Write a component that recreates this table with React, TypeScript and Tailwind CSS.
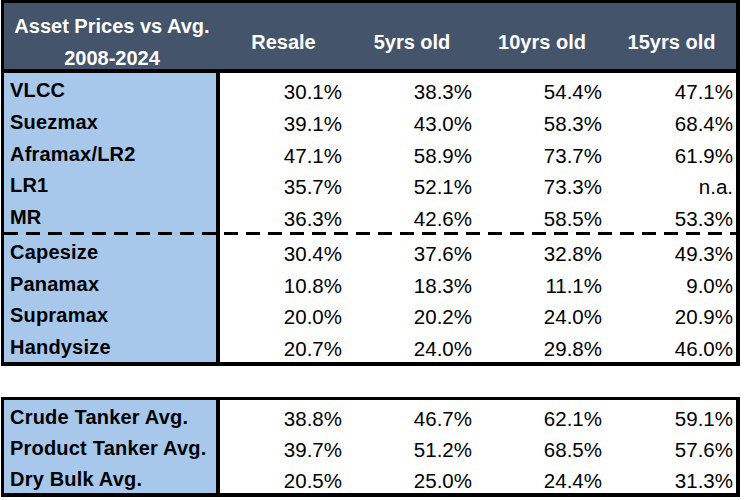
import React from "react";

type Row = { label: string; v: string[] };

const tankers: Row[] = [
  { label: "VLCC", v: ["30.1%", "38.3%", "54.4%", "47.1%"] },
  { label: "Suezmax", v: ["39.1%", "43.0%", "58.3%", "68.4%"] },
  { label: "Aframax/LR2", v: ["47.1%", "58.9%", "73.7%", "61.9%"] },
  { label: "LR1", v: ["35.7%", "52.1%", "73.3%", "n.a."] },
  { label: "MR", v: ["36.3%", "42.6%", "58.5%", "53.3%"] },
];

const bulkers: Row[] = [
  { label: "Capesize", v: ["30.4%", "37.6%", "32.8%", "49.3%"] },
  { label: "Panamax", v: ["10.8%", "18.3%", "11.1%", "9.0%"] },
  { label: "Supramax", v: ["20.0%", "20.2%", "24.0%", "20.9%"] },
  { label: "Handysize", v: ["20.7%", "24.0%", "29.8%", "46.0%"] },
];

const avgs: Row[] = [
  { label: "Crude Tanker Avg.", v: ["38.8%", "46.7%", "62.1%", "59.1%"] },
  { label: "Product Tanker Avg.", v: ["39.7%", "51.2%", "68.5%", "57.6%"] },
  { label: "Dry Bulk Avg.", v: ["20.5%", "25.0%", "24.4%", "31.3%"] },
];

const colCls = [
  "w-[127px] pr-[5px]",
  "w-[130px] pr-[5px]",
  "w-[130px] pr-[5px]",
  "w-[129px] pr-[3px]",
];

const font = { fontFamily: '"Liberation Sans", Arial, sans-serif' };

function DataRow({ r, h }: { r: Row; h: string }) {
  return (
    <div className={`flex ${h}`}>
      <div className="w-[216px] shrink-0 bg-[#a7c8eb] border-r-4 border-black pl-[6px] pt-[3px] leading-[28px] text-[20px] font-bold tracking-[0.2px] text-black whitespace-nowrap">
        {r.label}
      </div>
      {r.v.map((x, i) => (
        <div
          key={i}
          className={`${colCls[i]} shrink-0 text-right pt-[5px] leading-[28px] text-[20.5px] text-black`}
        >
          {x}
        </div>
      ))}
    </div>
  );
}

export default function App() {
  return (
    <div className="w-[746px] h-[500px] bg-white overflow-hidden" style={font}>
      <div className="ml-[1px] w-[739px] border-t-[3px] border-l-[3px] border-r-4 border-b-4 border-black">
        <div className="flex h-[66px] bg-[#44546a] text-white font-bold text-[20px] leading-[32px]">
          <div className="w-[216px] shrink-0 flex items-center justify-center text-center pt-[12px]">
            <div>
              Asset Prices vs Avg.
              <br />
              2008-2024
            </div>
          </div>
          {["Resale", "5yrs old", "10yrs old", "15yrs old"].map((t, i) => (
            <div
              key={t}
              className={`${colCls[i].split(" ")[0]} shrink-0 flex items-center justify-center pt-[12px]`}
            >
              {t}
            </div>
          ))}
        </div>
        <div className="h-[4px] bg-black" />
        {tankers.map((r) => (
          <DataRow key={r.label} r={r} h="h-[31.8px]" />
        ))}
        <div className="h-[3px] bg-[repeating-linear-gradient(90deg,#000_0px,#000_14px,transparent_14px,transparent_22px),linear-gradient(90deg,#a7c8eb_0px,#a7c8eb_212px,#000_212px,#000_216px,#fff_216px)]" />
        {bulkers.map((r) => (
          <DataRow key={r.label} r={r} h="h-[31.75px]" />
        ))}
      </div>
      <div className="h-[31px]" />
      <div className="ml-[1px] w-[739px] border-t-[3px] border-l-[3px] border-r-4 border-b-4 border-black">
        {avgs.map((r) => (
          <DataRow key={r.label} r={r} h="h-[31px]" />
        ))}
      </div>
    </div>
  );
}
